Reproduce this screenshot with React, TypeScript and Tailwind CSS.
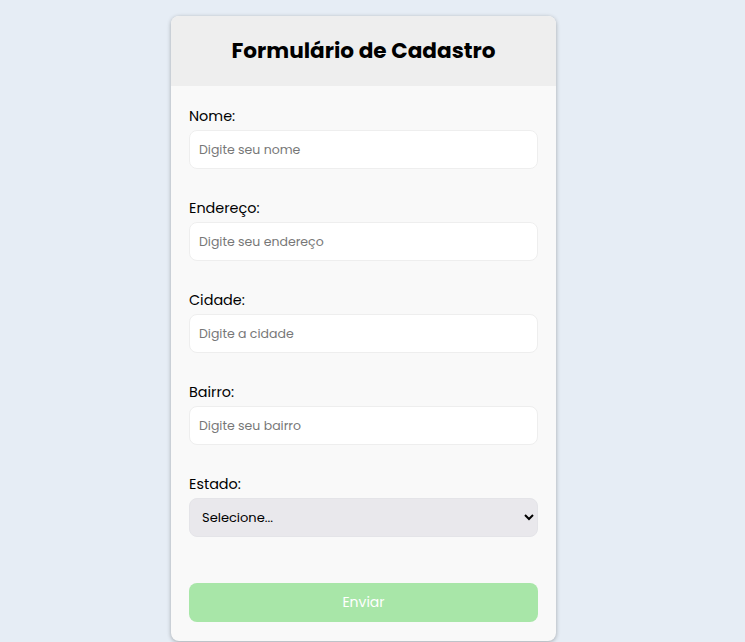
import { useState } from "react";

const FIELDS = [
  { id: "nome", label: "Nome:", placeholder: "Digite seu nome" },
  { id: "endereco", label: "Endereço:", placeholder: "Digite seu endereço" },
  { id: "cidade", label: "Cidade:", placeholder: "Digite a cidade" },
  { id: "bairro", label: "Bairro:", placeholder: "Digite seu bairro" },
];

export default function App() {
  const [estado, setEstado] = useState("");

  return (
    <div
      className="min-h-screen bg-[#e6edf5] flex justify-center pt-4 pr-[18px]"
      style={{ fontFamily: "Poppins, Inter, 'Noto Sans', sans-serif" }}
    >
      <div className="w-[385px] self-start bg-[#f9f9f9] rounded-lg shadow-[0_1px_4px_rgba(0,0,0,0.3)] overflow-hidden">
        {/* Header */}
        <div className="h-[70px] bg-[#eeeeee] flex items-center justify-center">
          <h1 className="text-[21.6px] font-bold text-black">Formulário de Cadastro</h1>
        </div>

        {/* Form */}
        <form className="px-[18px] pt-[19px] pb-[19px]" onSubmit={(e) => e.preventDefault()}>
          {FIELDS.map((f) => (
            <div key={f.id} className="mb-[28px]">
              <label htmlFor={f.id} className="block text-[14.4px] leading-[22px] text-black mb-[3px]">
                {f.label}
              </label>
              <input
                id={f.id}
                placeholder={f.placeholder}
                className="w-full h-[39px] px-[9px] bg-white border border-[#eeeeee] rounded-lg text-[12.5px] placeholder:text-[#777777] outline-none"
              />
            </div>
          ))}

          <div className="mb-[46px]">
            <label htmlFor="estado" className="block text-[14.4px] leading-[22px] text-black mb-[3px]">
              Estado:
            </label>
            <select
              id="estado"
              value={estado}
              onChange={(e) => setEstado(e.target.value)}
              className="w-full h-[39px] pl-[8px] bg-[#e9e8ec] border border-[#e4e4e8] rounded-lg text-[13px] text-black outline-none"
            >
              <option value="">Selecione...</option>
              <option value="SP">São Paulo</option>
              <option value="RJ">Rio de Janeiro</option>
              <option value="MG">Minas Gerais</option>
            </select>
          </div>

          <button
            type="submit"
            className="w-full h-[39px] bg-[#a8e6a8] rounded-lg text-[14px] text-white"
          >
            Enviar
          </button>
        </form>
      </div>
    </div>
  );
}
